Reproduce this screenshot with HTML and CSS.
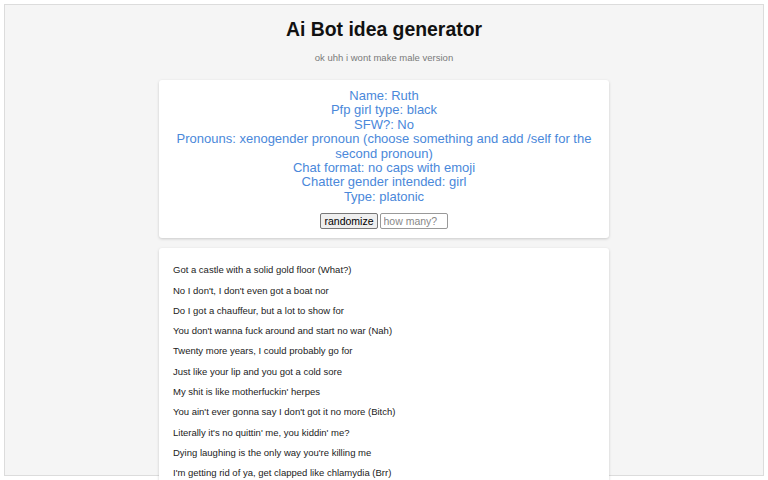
FILE: index.html
```html
<!DOCTYPE html>
<html>
<head>
<meta charset="utf-8">
<link rel="stylesheet" href="styles.css">
</head>
<body>
<div class="page">
  <h1 class="title">Ai Bot idea generator</h1>
  <p class="subtitle">ok uhh i wont make male version</p>
  <div class="card result">
    <div class="line">Name: Ruth</div>
    <div class="line">Pfp girl type: black</div>
    <div class="line">SFW?: No</div>
    <div class="line">Pronouns: xenogender pronoun (choose something and add /self for the second pronoun)</div>
    <div class="line">Chat format: no caps with emoji</div>
    <div class="line">Chatter gender intended: girl</div>
    <div class="line">Type: platonic</div>
    <div class="controls">
      <button class="btn">randomize</button>
      <input class="count" type="text" placeholder="how many?">
    </div>
  </div>
  <div class="card lyrics">
    <p>Got a castle with a solid gold floor (What?)</p>
    <p>No I don't, I don't even got a boat nor</p>
    <p>Do I got a chauffeur, but a lot to show for</p>
    <p>You don't wanna fuck around and start no war (Nah)</p>
    <p>Twenty more years, I could probably go for</p>
    <p>Just like your lip and you got a cold sore</p>
    <p>My shit is like motherfuckin' herpes</p>
    <p>You ain't ever gonna say I don't got it no more (Bitch)</p>
    <p>Literally it's no quittin' me, you kiddin' me?</p>
    <p>Dying laughing is the only way you're killing me</p>
    <p>I'm getting rid of ya, get clapped like chlamydia (Brr)</p>
    <p>Hit you with the Smith &amp; Wesson, nobody's remembering</p>
  </div>
</div>
</body>
</html>
```
FILE: styles.css
```css
html, body {
  margin: 0;
  padding: 0;
  background: #ffffff;
  font-family: "Liberation Sans", Arial, sans-serif;
}
body {
  padding: 4px;
  height: 480px;
  box-sizing: border-box;
  overflow: hidden;
}
.page {
  background: #f5f5f5;
  border: 1px solid #dcdcdc;
  height: 472px;
  box-sizing: border-box;
  padding: 12px 0 0;
}
.title {
  margin: 0;
  text-align: center;
  font-size: 19.4px;
  font-weight: bold;
  color: #111;
  line-height: 24px;
}
.subtitle {
  margin: 11px 0 0;
  text-align: center;
  font-size: 9.5px;
  color: #7a7a7a;
  line-height: 12px;
}
.card {
  background: #fff;
  width: 450px;
  margin: 16px auto 0;
  border-radius: 3px;
  box-shadow: 0 1px 3px rgba(0,0,0,0.18);
  box-sizing: border-box;
}
.result {
  padding: 9px 12px 9px;
  text-align: center;
  color: #4a88da;
  font-size: 13px;
  line-height: 14.4px;
}
.controls {
  margin-top: 9px;
  display: flex;
  justify-content: center;
  gap: 2px;
}
.btn {
  font-family: "Liberation Sans", Arial, sans-serif;
  font-size: 10.5px;
  height: 16px;
  padding: 0 3px;
  border: 1px solid #777;
  border-radius: 2px;
  background: #efefef;
  color: #000;
}
.count {
  font-family: "Liberation Sans", Arial, sans-serif;
  font-size: 10.5px;
  width: 68px;
  height: 16px;
  box-sizing: border-box;
  padding: 0 3px;
  border: 1px solid #999;
  border-radius: 2px;
}
.count::placeholder { color: #888; }
.lyrics {
  margin-top: 10px;
  padding: 12px 14px;
  font-size: 9.5px;
  color: #222;
}
.lyrics p {
  margin: 0;
  line-height: 20.3px;
}
```
